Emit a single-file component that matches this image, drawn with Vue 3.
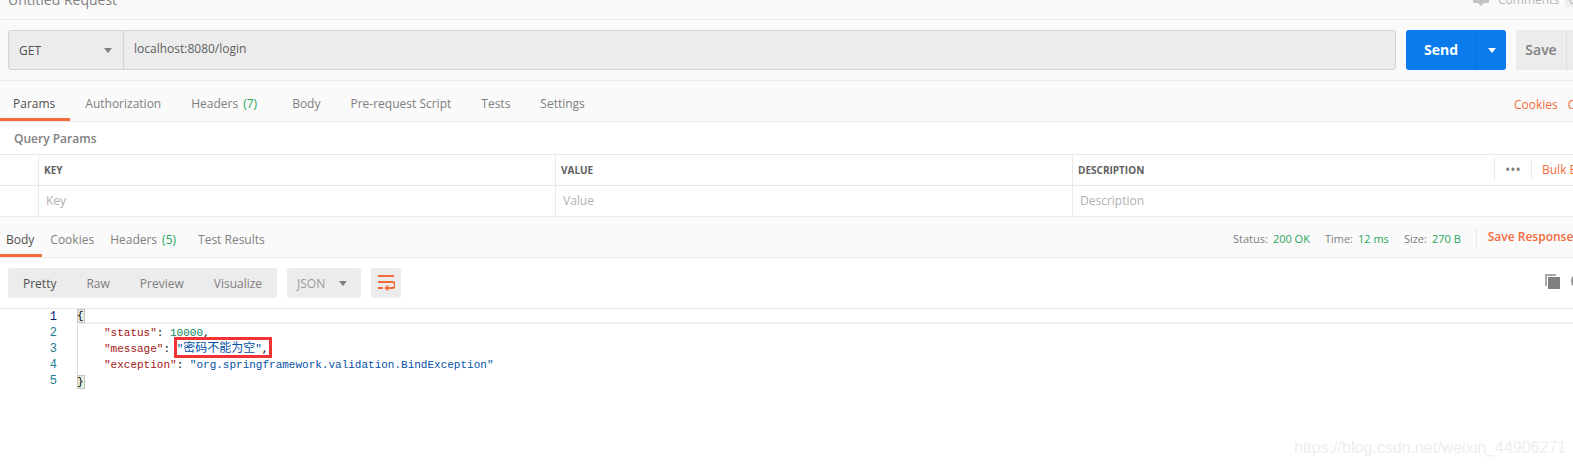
<script setup>
const reqTabs = [
  { label: 'Params', active: true },
  { label: 'Authorization' },
  { label: 'Headers', badge: '(7)', wide: true },
  { label: 'Body' },
  { label: 'Pre-request Script' },
  { label: 'Tests' },
  { label: 'Settings' },
]
const resTabs = [
  { label: 'Body', active: true },
  { label: 'Cookies' },
  { label: 'Headers', badge: '(5)', wide: true },
  { label: 'Test Results' },
]
const views = ['Pretty', 'Raw', 'Preview', 'Visualize']
const stats = [
  ['Status:', '200 OK'],
  ['Time:', '12 ms'],
  ['Size:', '270 B'],
]
</script>

<template>
  <div class="app">
    <header class="title-bar">
      <span class="title">Untitled Request</span>
      <div class="comments">
        <svg class="comment-icon" width="16" height="8" viewBox="0 0 16 8"><path d="M0 0h16v4h-5l-3 3-3-3H0z" fill="#c4c4c4" /></svg>
        <span>Comments</span>
        <span class="count">0</span>
      </div>
    </header>

    <section class="url-bar">
      <div class="url-box">
        <div class="method">
          <span>GET</span>
          <i class="caret"></i>
        </div>
        <div class="url">localhost:8080/login</div>
      </div>
      <div class="send">
        <span class="send-label">Send</span>
        <span class="send-arrow"><i class="caret white"></i></span>
      </div>
      <div class="save">
        <span class="save-label">Save</span>
        <span class="save-arrow"></span>
      </div>
    </section>

    <nav class="req-tabs">
      <a v-for="t in reqTabs" :key="t.label" class="tab" :class="{ active: t.active, wide: t.wide }">
        {{ t.label }}<span v-if="t.badge" class="badge">{{ t.badge }}</span>
      </a>
      <div class="req-links">
        <span>Cookies</span>
        <span>Code</span>
      </div>
    </nav>

    <section class="params">
      <div class="params-title">Query Params</div>
      <div class="row head">
        <div class="cell check"></div>
        <div class="cell">KEY</div>
        <div class="cell">VALUE</div>
        <div class="cell desc-head">
          <span>DESCRIPTION</span>
          <div class="head-tools">
            <span class="dots">•••</span>
            <span class="bulk">Bulk Edit</span>
          </div>
        </div>
      </div>
      <div class="row body-row">
        <div class="cell check"></div>
        <div class="cell ph">Key</div>
        <div class="cell ph">Value</div>
        <div class="cell ph">Description</div>
      </div>
    </section>

    <section class="res-head">
      <a v-for="t in resTabs" :key="t.label" class="res-tab" :class="{ active: t.active, wide: t.wide }">
        {{ t.label }}<span v-if="t.badge" class="badge">{{ t.badge }}</span>
      </a>
      <div class="res-meta">
        <span v-for="s in stats" :key="s[0]" class="stat">{{ s[0] }}<b>{{ s[1] }}</b></span>
        <span class="save-res">Save Response</span>
      </div>
    </section>

    <section class="toolbar">
      <div class="views">
        <span v-for="v in views" :key="v" class="view" :class="{ on: v === 'Pretty' }">{{ v }}</span>
      </div>
      <div class="lang">
        <span>JSON</span>
        <i class="caret"></i>
      </div>
      <div class="wrap-btn">
        <svg width="18" height="18" viewBox="0 0 18 18" fill="none" stroke="#f26b3a" stroke-width="2">
          <path d="M1 2h16M1 8h14a2.5 2.5 0 0 1 0 6H9M1 14h5" />
          <path d="M11 11.5 8.5 14l2.5 2.5" stroke-width="1.6" />
        </svg>
      </div>
      <div class="tool-icons">
        <svg class="copy" width="15" height="15" viewBox="0 0 15 15">
          <path d="M0 0h11v2H2v10H0z" fill="#a8a8a8" />
          <path d="M3 3h12v12H3z" fill="#808080" />
        </svg>
        <i class="search-cut"></i>
      </div>
    </section>

    <section class="code">
      <div class="line l1"><span class="no first">1</span><span class="src"><span class="match">{</span></span></div>
      <div class="line"><span class="no">2</span><span class="src ind"><span class="k">"status"</span>: <span class="n">10000</span>,</span></div>
      <div class="line"><span class="no">3</span><span class="src ind"><span class="k">"message"</span>: <span class="s">"<span class="cjk">密码不能为空</span>"</span>,<span class="red-box"></span></span></div>
      <div class="line"><span class="no">4</span><span class="src ind"><span class="k">"exception"</span>: <span class="s">"org.springframework.validation.BindException"</span></span></div>
      <div class="line l5"><span class="no">5</span><span class="src"><span class="match">}</span></span></div>
    </section>

    <div class="watermark">https://blog.csdn.net/weixin_44906271</div>
  </div>
</template>

<style>
html, body { margin: 0; background: #fff; overflow: hidden; }
</style>

<style scoped>
.app {
  position: relative;
  width: 1573px;
  height: 466px;
  overflow: hidden;
  background: #fff;
  font-family: "Open Sans", "Noto Sans", sans-serif;
  font-size: 12px;
  color: #808080;
}
.title-bar {
  height: 19px;
  border-bottom: 1px solid #e9e9e9;
  background: #fafafa;
  display: flex;
  justify-content: space-between;
  padding-left: 8px;
  overflow: hidden;
}
.title { font-size: 14px; line-height: 14px; margin-top: -7px; color: #808080; }
.comments {
  display: flex;
  align-items: flex-start;
  flex: none;
  width: 100px;
  margin-top: -7px;
  color: #b5b5b5;
  line-height: 14px;
}
.comment-icon { margin-top: 6px; margin-right: 9px; flex: none; }
.count { background: #eee; padding: 0 4px; margin-left: 6px; }

.url-bar {
  height: 60px;
  background: #fafafa;
  border-bottom: 1px solid #e9e9e9;
  display: flex;
  align-items: center;
  padding-left: 8px;
}
.url-box {
  width: 1388px;
  height: 40px;
  box-sizing: border-box;
  flex: none;
  display: flex;
  background: #ececec;
  border: 1px solid #d4d4d4;
  border-radius: 3px;
}
.method {
  width: 115px;
  flex: none;
  box-sizing: border-box;
  display: flex;
  align-items: center;
  justify-content: space-between;
  padding: 0 11px 0 10px;
  border-right: 1px solid #d4d4d4;
  color: #505050;
}
.url { line-height: 36px; padding-left: 10px; color: #606060; }
.caret {
  width: 0;
  height: 0;
  border-left: 4px solid transparent;
  border-right: 4px solid transparent;
  border-top: 5px solid #808080;
}
.caret.white { border-top-color: #fff; }
.send {
  margin-left: 10px;
  width: 100px;
  height: 40px;
  flex: none;
  display: flex;
  background: #097bed;
  border-radius: 3px;
  color: #fff;
  font-weight: 700;
  font-size: 14px;
}
.send-label { width: 70px; line-height: 40px; text-align: center; }
.send-arrow {
  flex: 1;
  display: flex;
  align-items: center;
  justify-content: center;
  border-left: 1px solid #0a6fd4;
}
.save {
  margin-left: 10px;
  width: 70px;
  height: 40px;
  flex: none;
  display: flex;
  background: #ececec;
  border-radius: 3px 0 0 3px;
  font-weight: 600;
  font-size: 14px;
  color: #808080;
}
.save-label { width: 50px; line-height: 40px; text-align: center; border-right: 1px solid #dcdcdc; }

.req-tabs {
  height: 40px;
  background: #fafafa;
  border-bottom: 1px solid #e9e9e9;
  display: flex;
  position: relative;
}
.tab {
  padding: 0 15px;
  line-height: 46px;
  height: 37px;
  color: #808080;
  white-space: nowrap;
}
.tab:first-child { padding: 0 15px 0 13px; }
.tab.wide { padding-right: 20px; }
.tab.active { color: #505050; border-bottom: 3px solid #f26b3a; }
.badge { color: #26a65b; margin-left: 5px; }
.req-links {
  margin-left: auto;
  display: flex;
  gap: 10px;
  width: 59px;
  flex: none;
  line-height: 48px;
  color: #f26b3a;
  overflow: hidden;
  white-space: nowrap;
}

.params { background: #fff; }
.params-title {
  height: 32px;
  line-height: 34px;
  padding-left: 14px;
  font-weight: 600;
  color: #808080;
  box-sizing: border-box;
}
.row {
  display: grid;
  grid-template-columns: 38px 517px 517px 1fr;
  height: 31px;
  box-sizing: border-box;
  border-top: 1px solid #e9e9e9;
}
.body-row { height: 32px; border-bottom: 1px solid #e9e9e9; }
.cell {
  line-height: 30px;
  padding-left: 5px;
  border-left: 1px solid #e9e9e9;
  white-space: nowrap;
}
.cell.check { border-left: none; }
.head .cell { font-size: 10px; font-weight: 700; color: #606060; }
.ph { color: #b0b0b0; padding-left: 7px; }
.desc-head { display: flex; justify-content: space-between; }
.head-tools {
  display: flex;
  width: 79px;
  flex: none;
  align-items: center;
  overflow: hidden;
}
.head .cell .dots {
  border-left: 1px solid #e9e9e9;
  height: 24px;
  line-height: 23px;
  width: 37px;
  flex: none;
  box-sizing: border-box;
  text-align: center;
  font-size: 14px;
  color: #808080;
  font-weight: 400;
}
.head .cell .bulk {
  border-left: 1px solid #e9e9e9;
  height: 20px;
  line-height: 20px;
  padding-left: 10px;
  font-size: 12px;
  font-weight: 400;
  color: #f26b3a;
}

.res-head {
  height: 40px;
  background: #fafafa;
  border-bottom: 1px solid #e9e9e9;
  display: flex;
}
.res-tab {
  height: 37px;
  line-height: 45px;
  padding: 0 8px;
  color: #808080;
  white-space: nowrap;
}
.res-tab:first-child { padding: 0 8px 0 6px; }
.res-tab.wide { padding-right: 14px; }
.res-tab.active { color: #505050; border-bottom: 3px solid #f26b3a; }
.res-meta {
  margin-left: auto;
  display: flex;
  width: 340px;
  flex: none;
  line-height: 44px;
  font-size: 11px;
  overflow: hidden;
  white-space: nowrap;
}
.stat { margin-right: 15px; }
.stat b { font-weight: 400; color: #26a65b; margin-left: 5px; }
.save-res {
  padding-left: 11px;
  height: 20px;
  line-height: 20px;
  margin-top: 10px;
  border-left: 1px solid #e9e9e9;
  color: #f26b3a;
  font-size: 12px;
  font-weight: 600;
}

.toolbar {
  height: 51px;
  border-bottom: 1px solid #e8e8e8;
  box-sizing: border-box;
  display: flex;
  align-items: flex-start;
  padding: 10px 0 0 8px;
  position: relative;
}
.views {
  width: 269px;
  height: 30px;
  flex: none;
  display: flex;
  align-items: center;
  background: #ececec;
  border-radius: 3px;
  padding-left: 15px;
  box-sizing: border-box;
  gap: 30px;
  color: #808080;
}
.view.on { color: #505050; }
.lang {
  width: 74px;
  height: 30px;
  margin-left: 10px;
  flex: none;
  box-sizing: border-box;
  background: #ececec;
  border-radius: 3px;
  display: flex;
  align-items: center;
  justify-content: space-between;
  padding: 0 14px 0 10px;
  color: #9a9a9a;
}
.wrap-btn {
  width: 30px;
  height: 30px;
  margin-left: 10px;
  flex: none;
  background: #ececec;
  border-radius: 3px;
  display: flex;
  align-items: center;
  justify-content: center;
}
.tool-icons {
  margin-left: auto;
  width: 28px;
  flex: none;
  padding-top: 6px;
  display: flex;
}
.copy { flex: none; }
.search-cut {
  width: 10px;
  height: 10px;
  border: 2px solid #909090;
  border-radius: 50%;
  margin: 0 0 0 11px;
  flex: none;
}

.code {
  font-family: "Liberation Mono", "Noto Sans CJK SC", monospace;
  font-size: 11px;
  color: #000;
}
.line {
  display: flex;
  height: 16px;
  line-height: 16px;
}
.no {
  width: 57px;
  flex: none;
  text-align: right;
  color: #237893;
  font-size: 12px;
}
.no.first { color: #0b216f; }
.src {
  position: relative;
  margin-left: 20px;
  flex: 1;
  white-space: pre;
  border-left: 1px solid #dcdcdc;
}
.l1 .src {
  align-self: flex-start;
  border-bottom: 2px solid #eee;
  height: 13px;
}
.match {
  display: inline-block;
  box-sizing: border-box;
  width: 8px;
  height: 14px;
  line-height: 15px;
  margin-left: -1px;
  vertical-align: top;
  background: #e8eee0;
  box-shadow: inset 0 0 0 1px #c4c4c4;
}
.l5 .match { margin-top: 2px; }
.ind { padding-left: 26px; }
.k { color: #a31515; }
.n { color: #098658; }
.s { color: #0451a5; }
.cjk { font-family: "Noto Sans CJK SC", sans-serif; font-size: 12px; line-height: 0; }
.red-box {
  position: absolute;
  left: 96px;
  top: -4px;
  width: 98px;
  height: 21px;
  box-sizing: border-box;
  border: 3px solid #f33333;
  pointer-events: none;
}
.watermark {
  position: absolute;
  left: 1294px;
  top: 438px;
  font-family: "Liberation Sans", sans-serif;
  font-size: 16px;
  line-height: 20px;
  color: #eeeeee;
  white-space: nowrap;
}
</style>
